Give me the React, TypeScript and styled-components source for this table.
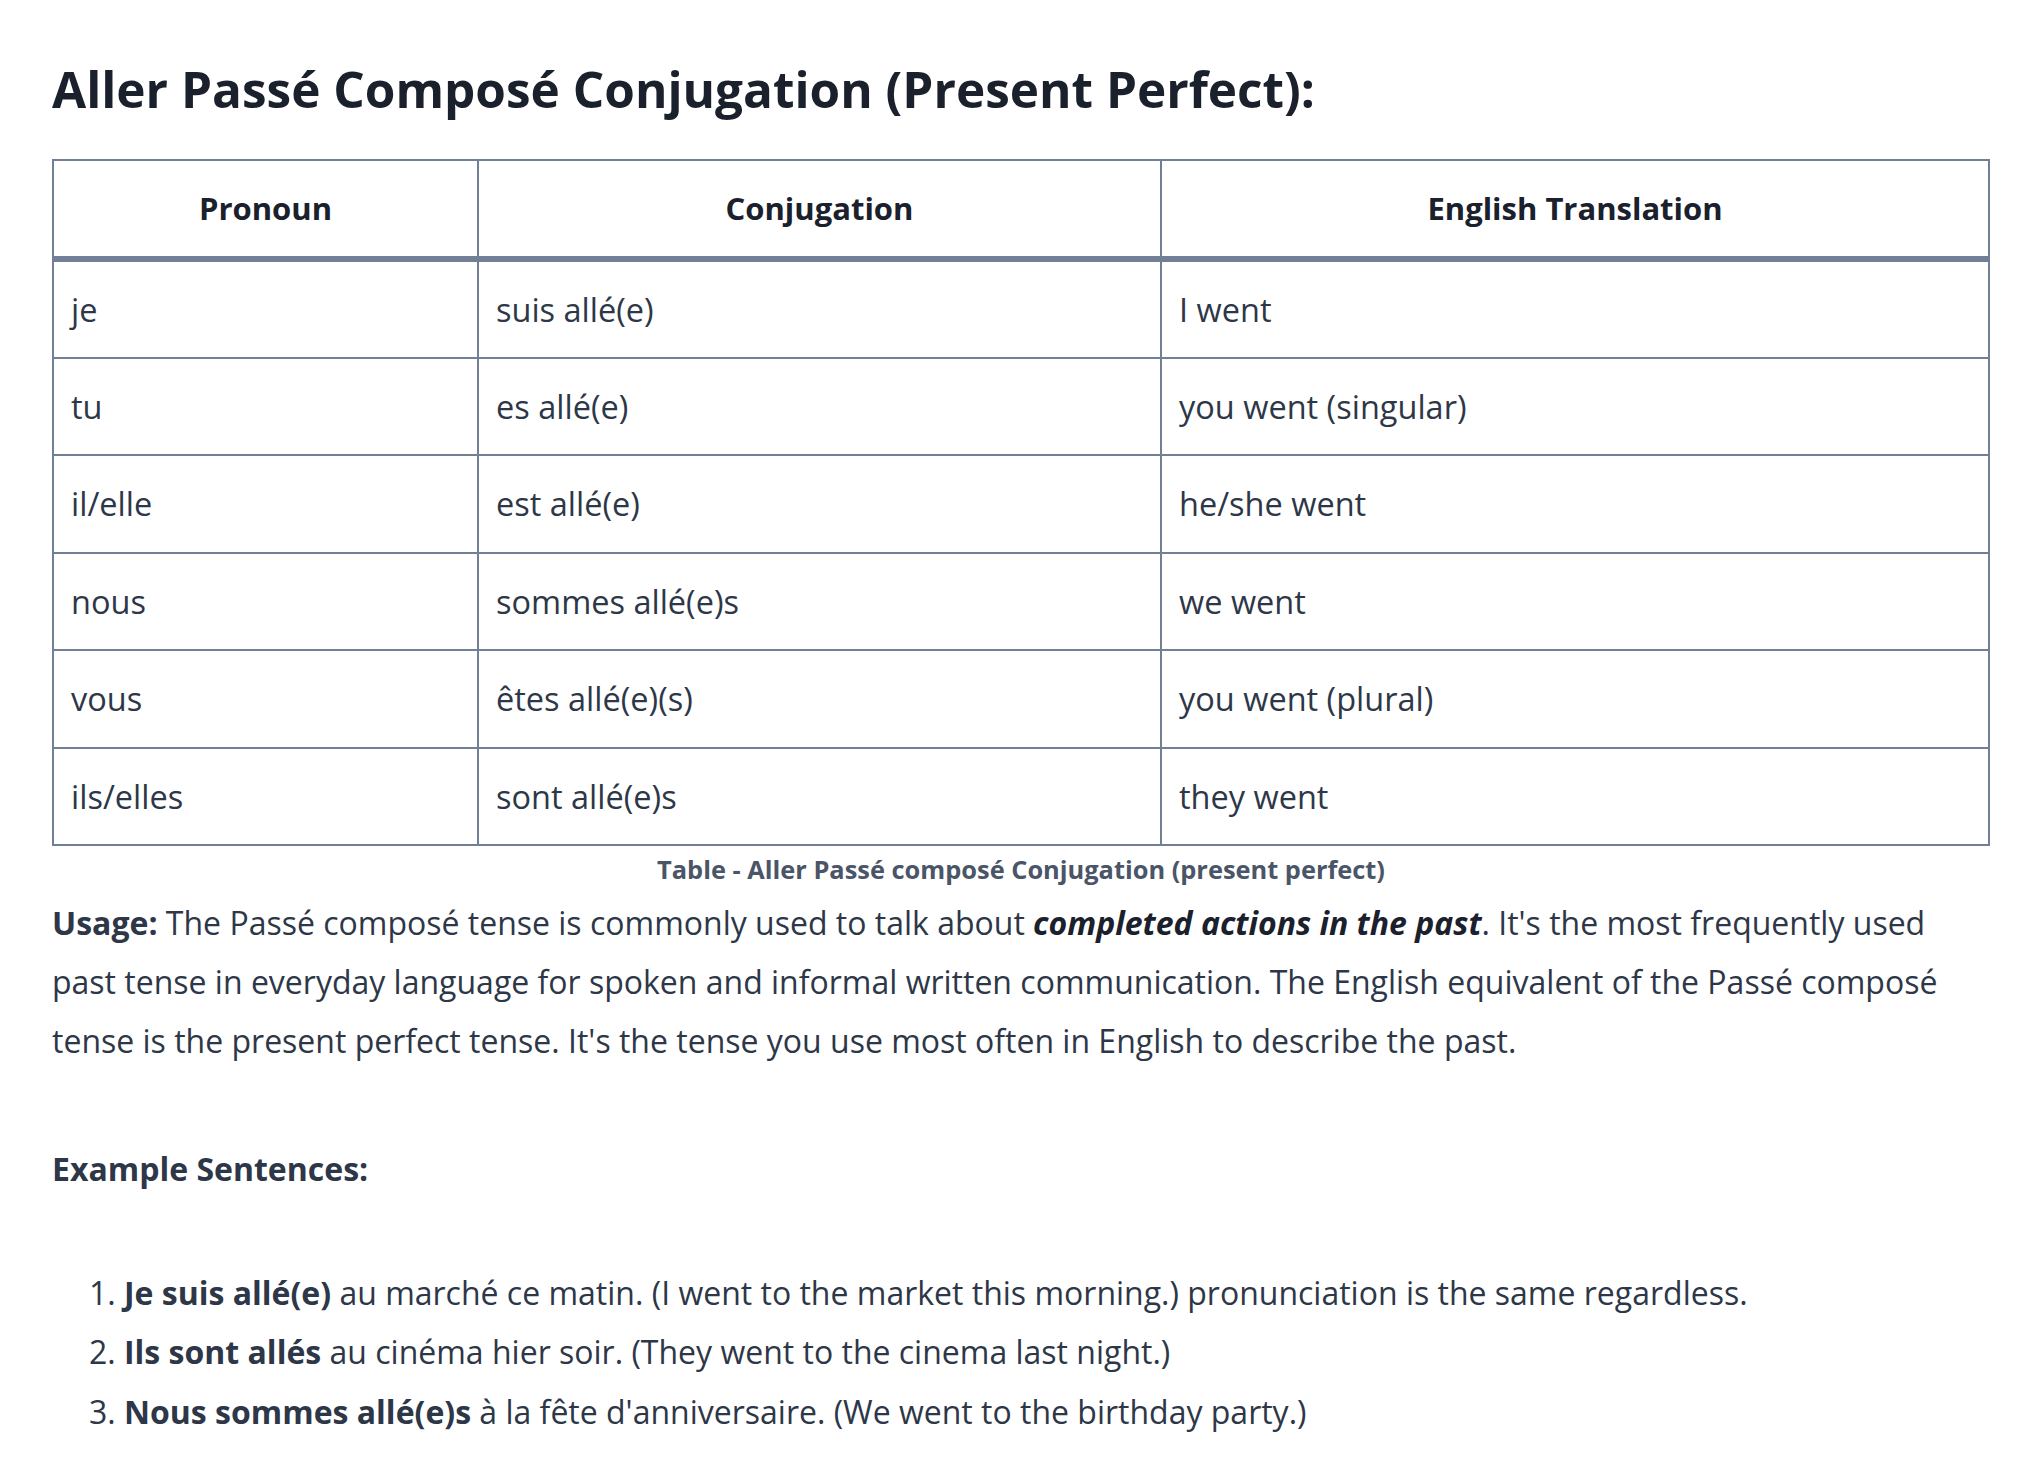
import React from "react";
import styled, { createGlobalStyle } from "styled-components";

const GlobalStyle = createGlobalStyle`
  html, body {
    margin: 0;
    padding: 0;
    background: #ffffff;
  }
  body {
    font-family: "Open Sans", Lato, "Liberation Sans", sans-serif;
    color: #2d3748;
  }
`;

const Page = styled.main`
  padding: 58px 53px 40px 52px;
`;

const Title = styled.h2`
  margin: 0 0 39px;
  font-size: 49.5px;
  line-height: 62px;
  font-weight: 700;
  color: #1a202c;
`;

const Table = styled.table`
  width: 100%;
  table-layout: fixed;
  border-collapse: separate;
  border-spacing: 0;
  border-top: 2px solid #718096;
  border-left: 2px solid #718096;
`;

const Col = styled.col<{ $w: number }>`
  width: ${(p) => p.$w}px;
`;

const HeadCell = styled.th`
  padding: 0 17px;
  font-size: 31px;
  line-height: 94.5px;
  font-weight: 700;
  color: #1a202c;
  text-align: center;
  border-right: 2px solid #718096;
  border-bottom: 6px solid #718096;
`;

const Cell = styled.td`
  padding: 0 17px;
  font-size: 32.5px;
  line-height: 95.4px;
  font-weight: 400;
  color: #2d3748;
  text-align: left;
  border-right: 2px solid #718096;
  border-bottom: 2px solid #718096;
`;

const Caption = styled.div`
  margin-top: 5px;
  text-align: center;
  font-size: 25.4px;
  line-height: 36px;
  font-weight: 700;
  color: #4a5568;
`;

const Paragraph = styled.p<{ $gap: number }>`
  margin: ${(p) => p.$gap}px 0 0;
  font-size: 32px;
  line-height: 59px;
  color: #2d3748;
`;

const Strong = styled.strong`
  font-weight: 700;
  color: #2d3748;
`;

const Emph = styled.em`
  font-weight: 700;
  font-style: italic;
  color: #1a202c;
`;

const List = styled.ol`
  margin: 65px 0 0;
  padding-left: 72px;
  font-size: 32px;
  line-height: 59.5px;
  color: #2d3748;
`;

const Item = styled.li`
  padding-left: 0;
`;

const rows: [string, string, string][] = [
  ["je", "suis allé(e)", "I went"],
  ["tu", "es allé(e)", "you went (singular)"],
  ["il/elle", "est allé(e)", "he/she went"],
  ["nous", "sommes allé(e)s", "we went"],
  ["vous", "êtes allé(e)(s)", "you went (plural)"],
  ["ils/elles", "sont allé(e)s", "they went"],
];

export default function App() {
  return (
    <>
      <GlobalStyle />
      <Page>
        <Title>Aller Passé Composé Conjugation (Present Perfect):</Title>
        <Table>
          <colgroup>
            <Col $w={425} />
            <Col $w={683} />
            <Col $w={828} />
          </colgroup>
          <thead>
            <tr>
              <HeadCell>Pronoun</HeadCell>
              <HeadCell>Conjugation</HeadCell>
              <HeadCell>English Translation</HeadCell>
            </tr>
          </thead>
          <tbody>
            {rows.map((r) => (
              <tr key={r[0]}>
                <Cell>{r[0]}</Cell>
                <Cell>{r[1]}</Cell>
                <Cell>{r[2]}</Cell>
              </tr>
            ))}
          </tbody>
        </Table>
        <Caption>Table - Aller Passé composé Conjugation (present perfect)</Caption>
        <Paragraph $gap={6}>
          <Strong>Usage:</Strong> The Passé composé tense is commonly used to talk about{" "}
          <Emph>completed actions in the past</Emph>. It's the most frequently used past tense in
          everyday language for spoken and informal written communication. The English equivalent
          of the Passé composé tense is the present perfect tense. It's the tense you use most often
          in English to describe the past.
        </Paragraph>
        <Paragraph $gap={69}>
          <Strong>Example Sentences:</Strong>
        </Paragraph>
        <List>
          <Item>
            <Strong>Je suis allé(e)</Strong> au marché ce matin. (I went to the market this
            morning.) pronunciation is the same regardless.
          </Item>
          <Item>
            <Strong>Ils sont allés</Strong> au cinéma hier soir. (They went to the cinema last
            night.)
          </Item>
          <Item>
            <Strong>Nous sommes allé(e)s</Strong> à la fête d'anniversaire. (We went to the birthday
            party.)
          </Item>
        </List>
      </Page>
    </>
  );
}
